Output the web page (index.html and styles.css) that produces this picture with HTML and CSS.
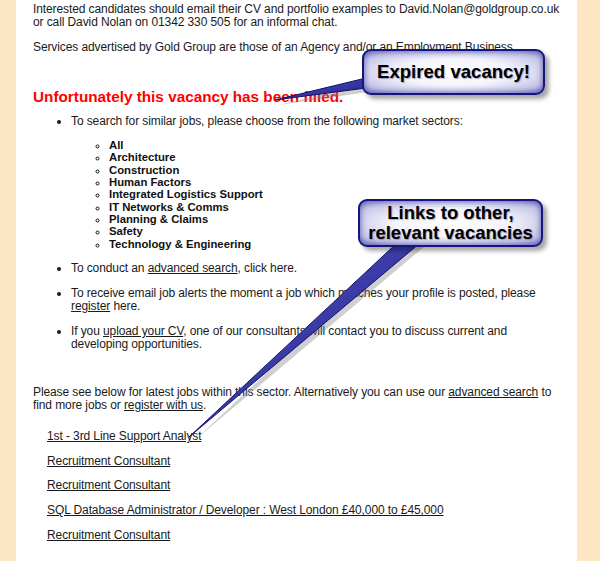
FILE: index.html
```html
<!DOCTYPE html>
<html>
<head>
<meta charset="utf-8">
<link rel="stylesheet" href="styles.css">
</head>
<body>
<div class="page">
  <div class="content">
    <p class="intro">Interested candidates should email their CV and portfolio examples to David.Nolan@goldgroup.co.uk<br>or call David Nolan on 01342 330 505 for an informal chat.</p>
    <p class="intro">Services advertised by Gold Group are those of an Agency and/or an Employment Business</p>
    <h2 class="filled">Unfortunately this vacancy has been filled.</h2>
    <ul class="options">
      <li>To search for similar jobs, please choose from the following market sectors:
        <ul class="sectors">
          <li>All</li>
          <li>Architecture</li>
          <li>Construction</li>
          <li>Human Factors</li>
          <li>Integrated Logistics Support</li>
          <li>IT Networks &amp; Comms</li>
          <li>Planning &amp; Claims</li>
          <li>Safety</li>
          <li>Technology &amp; Engineering</li>
        </ul>
      </li>
      <li>To conduct an <a href="#">advanced search</a>, click here.</li>
      <li>To receive email job alerts the moment a job which matches your profile is posted, please <a href="#">register</a> here.</li>
      <li>If you <a href="#">upload your CV</a>, one of our consultants will contact you to discuss current and developing opportunities.</li>
    </ul>
    <p class="latest">Please see below for latest jobs within this sector. Alternatively you can use our <a href="#">advanced search</a> to find more jobs or <a href="#">register with us</a>.</p>
    <div class="jobs">
      <a href="#">1st - 3rd Line Support Analyst</a>
      <a href="#">Recruitment Consultant</a>
      <a href="#">Recruitment Consultant</a>
      <a href="#">SQL Database Administrator / Developer : West London £40,000 to £45,000</a>
      <a href="#">Recruitment Consultant</a>
    </div>
  </div>
</div>

<svg class="tails" width="600" height="561" viewBox="0 0 600 561">
  <defs>
    <linearGradient id="tg" x1="0" y1="0" x2="1" y2="1">
      <stop offset="0" stop-color="#6868c4"/>
      <stop offset="0.5" stop-color="#3a3aa6"/>
      <stop offset="1" stop-color="#1e1e80"/>
    </linearGradient>
  </defs>
  <polygon points="366,79 366,88 277,101" fill="#888" opacity="0.4" transform="translate(2,4)"/>
  <polygon points="366,78 366,88 275,100" fill="url(#tg)" stroke="#12126c" stroke-width="1"/>
  <polygon points="397,243 420,243 190,437" fill="#888" opacity="0.4" transform="translate(5,3)"/>
  <polygon points="397,243 420,243 189,437" fill="url(#tg)" stroke="#12126c" stroke-width="1"/>
</svg>
<div class="callout expired">Expired vacancy!</div>
<div class="callout links">Links to other,<br>relevant vacancies</div>
</body>
</html>
```
FILE: styles.css
```css
html, body {
  margin: 0;
  padding: 0;
}
body {
  background: #fde6c4;
  font-family: "Liberation Sans", Arial, sans-serif;
  font-size: 12px;
  color: #1a1a1a;
  width: 600px;
  height: 561px;
  overflow: hidden;
  position: relative;
}
.page {
  margin-left: 16px;
  width: 561px;
  height: 561px;
  background: #fff;
}
.content {
  padding: 3px 0 0 17px;
  width: 530px;
  line-height: 13px;
  letter-spacing: -0.1px;
}
p {
  margin: 0;
}
.intro {
  margin-bottom: 12px;
  white-space: nowrap;
}
.intro + .intro {
  margin-bottom: 0;
}
.filled {
  color: #f00;
  font-size: 15.3px;
  font-weight: bold;
  letter-spacing: 0;
  margin: 34px 0 0 0;
  line-height: 18px;
}
a {
  color: #1a1a1a;
  text-decoration: underline;
}
.options {
  margin: 9px 0 0 0;
  padding-left: 38px;
  list-style: disc;
}
.options > li {
  margin-bottom: 12px;
}
.sectors {
  margin: 11px 0 2px 0;
  padding-left: 38px;
  list-style: circle;
  font-weight: bold;
  font-size: 11.3px;
  letter-spacing: 0;
  line-height: 12.35px;
  color: #111;
}
.sectors li {
  margin: 0;
}
.latest {
  margin-top: 35px;
}
.jobs {
  display: flex;
  flex-direction: column;
  align-items: flex-start;
  gap: 11.7px;
  padding: 18px 0 0 14px;
}
.callout {
  position: absolute;
  box-sizing: border-box;
  border: 2px solid #15157a;
  border-radius: 9px;
  background: radial-gradient(ellipse at center, #ffffff 0%, #f4f4fb 45%, #c6c6e8 80%, #8888cc 100%);
  box-shadow: inset 0 0 6px #5050b0, 4px 4px 4px rgba(0, 0, 0, 0.35);
  font-family: "Liberation Sans", Arial, sans-serif;
  font-weight: bold;
  color: #000;
  text-align: center;
  text-shadow: 1px 1px 1px rgba(90, 90, 140, 0.5);
}
.expired {
  left: 362px;
  top: 49px;
  width: 183px;
  height: 46px;
  font-size: 18.6px;
  line-height: 42px;
}
.links {
  left: 358px;
  top: 199px;
  width: 185px;
  height: 48px;
  font-size: 18.5px;
  line-height: 20px;
  padding-top: 2px;
}
.tails {
  position: absolute;
  left: 0;
  top: 0;
  pointer-events: none;
}
```
